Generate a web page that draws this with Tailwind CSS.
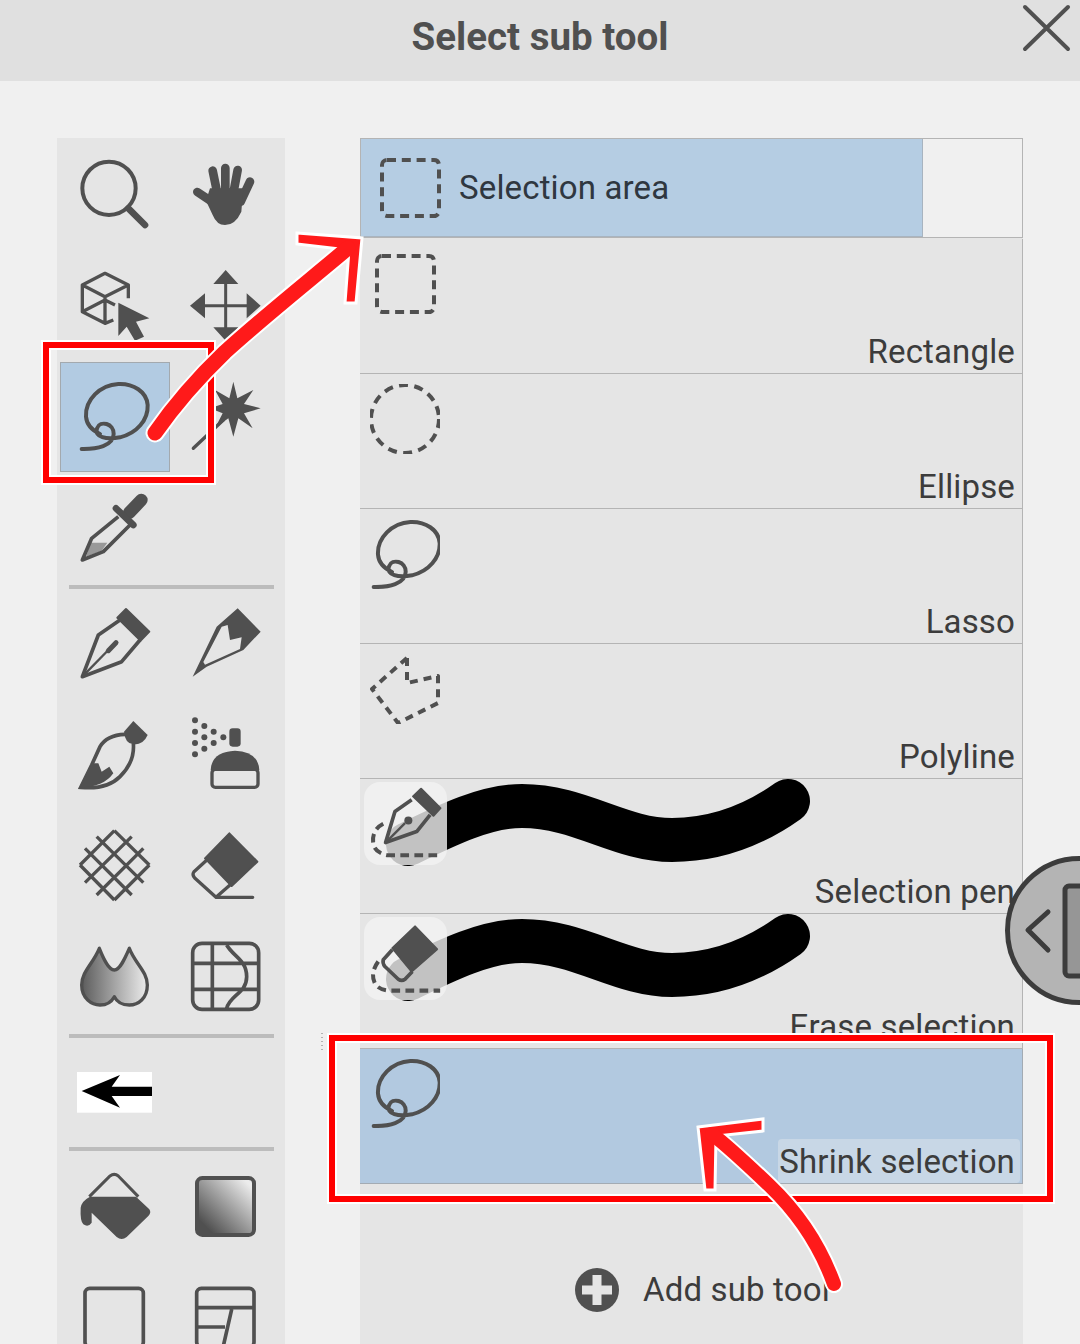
<!DOCTYPE html>
<html lang="en">

<head>
    <meta charset="UTF-8">
    <meta name="viewport" content="width=device-width, initial-scale=1.0">
    <title>Select sub tool</title>
    <script src="https://cdn.jsdelivr.net/npm/@tailwindcss/browser@4"></script>
</head>

<body class="relative w-[1080px] h-[1344px] overflow-hidden bg-[#f0f0f0] font-[Roboto,sans-serif] text-[#3c3c3c]">
    <!-- shared shapes -->
    <svg class="absolute w-0 h-0">
        <defs>
            <linearGradient id="dropFill" x1="0" y1="0" x2="1" y2="0">
                <stop offset="0" stop-color="#5c5c5c" />
                <stop offset="1" stop-color="#ececec" />
            </linearGradient>
            <linearGradient id="squareFill" x1="0" y1="1" x2="1" y2="0">
                <stop offset="0.15" stop-color="#505050" />
                <stop offset="0.9" stop-color="#ececec" />
            </linearGradient>
            <path id="lasso" fill="none" stroke="#505050" stroke-width="12" stroke-linecap="round"
                d="M95 957C140 958 190 948 191 912C192 880 150 870 141 895C132 922 170 930 210 922C260 910 295 870 293 825C290 785 250 760 205 762C150 765 105 810 108 860C110 885 128 902 150 912" />
            <rect id="dashSquare" x="7" y="7" width="57" height="56" rx="5" fill="none" stroke="#505050"
                stroke-width="4" stroke-dasharray="9 5.8" />
        </defs>
    </svg>

    <header class="relative h-[81px] bg-[#e0e0e0] flex items-center justify-center pb-[7px]">
        <h1 class="text-[38.5px] font-bold text-[#505050]">Select sub tool</h1>
        <svg class="absolute left-[1020px] top-[2px] w-[52px] h-[52px]" viewBox="0 0 52 52" fill="none" stroke="#505050" stroke-width="4" stroke-linecap="round">
            <path d="M5 5L48 47M48 5L5 47" />
        </svg>
    </header>

    <main class="flex items-start pl-[57px] pt-[57px]">
        <!-- tool palette -->
        <aside class="w-[228px] h-[1206px] bg-[#e5e5e5] pl-[3px] pt-px">
            <div class="grid grid-cols-[111px_111px]">
                <svg class="w-[111px] h-[111px]" viewBox="30 27 333 333">
                    <circle cx="177" cy="175" r="80" fill="none" stroke="#505050" stroke-width="12" />
                    <path d="M235 235L285 285" stroke="#505050" stroke-width="20" stroke-linecap="round" />
                </svg>
                <svg class="w-[111px] h-[111px]" viewBox="363 27 333 333">
                    <g stroke="#505050" stroke-width="26" stroke-linecap="round">
                        <path d="M488 122L502 190M526 114V190M563 120L550 190M600 155L572 215M442 186L490 218" />
                    </g>
                    <path fill="#505050" d="M480 175H580L574 245Q556 285 525 285Q500 285 488 255L468 212Z" />
                </svg>
                <svg class="w-[111px] h-[111px]" viewBox="30 360 333 333">
                    <path fill="none" stroke="#505050" stroke-width="10" stroke-linejoin="round" d="M235 505V465L165 430L97 465V545L165 580L190 570M97 465L165 500L235 465M165 500V580M97 545L165 510L195 525" />
                    <path fill="#505050" d="M205 518L298 565L258 575L282 620L255 632L230 590L205 618Z" />
                </svg>
                <svg class="w-[111px] h-[111px]" viewBox="363 360 333 333">
                    <path d="M527 440V610M440 527H615" stroke="#505050" stroke-width="9" />
                    <path fill="#505050" d="M527 420L565 462H490ZM527 632L565 592H490ZM420 527L465 490V565ZM632 527L590 490V565Z" />
                </svg>
                <div class="w-[110px] h-[110px] mt-px bg-[#b2cbe2] border border-[#a3a9ae]">
                    <svg class="w-[111px] h-[111px] -ml-px -mt-[2px]" viewBox="30 693 333 333">
                        <use href="#lasso" />
                    </svg>
                </div>
                <svg class="w-[111px] h-[111px]" viewBox="363 693 333 333">
                    <path d="M430 955L520 870" stroke="#505050" stroke-width="10" stroke-linecap="round" />
                    <path fill="#505050" d="M550 755L562 805L610 780L582 822L632 835L582 850L608 895L565 865L550 920L535 865L495 895L518 850L480 835L518 822L495 780L538 805Z" />
                </svg>
                <svg class="w-[111px] h-[111px]" viewBox="30 1026 333 333">
                    <path d="M274 1110L238 1148" stroke="#505050" stroke-width="38" stroke-linecap="round" />
                    <path d="M198 1135L250 1185" stroke="#505050" stroke-width="20" stroke-linecap="round" />
                    <path fill="#999" d="M122 1238H172L155 1262L108 1280Z" />
                    <path fill="none" stroke="#505050" stroke-width="11" stroke-linejoin="round" d="M205 1160L125 1225L97 1290L160 1265L240 1185" />
                </svg>
            </div>
            <div class="w-[205px] h-1 mt-[2px] ml-[9px] bg-[#bcbcbc]"></div>
            <div class="grid grid-cols-[111px_111px] -mt-[2px]">
                <svg class="w-[111px] h-[111px]" viewBox="30 21 333 333">
                    <path fill="none" stroke="#505050" stroke-width="11" stroke-linejoin="round" d="M210 120L145 165L97 290L215 245L270 180" />
                    <path fill="#505050" stroke="#505050" stroke-width="6" stroke-linejoin="round" d="M228 87L298 155L272 182L202 113Z" />
                    <path d="M97 290L175 210" stroke="#505050" stroke-width="7" />
                    <path d="M175 212L198 188" stroke="#505050" stroke-width="15" stroke-linecap="round" />
                </svg>
                <svg class="w-[111px] h-[111px]" viewBox="363 21 333 333">
                    <path fill="#505050" d="M563 85L632 155L580 210L470 260L428 290L500 140Z" />
                    <path fill="#e5e5e5" d="M515 140L533 135L540 180L575 172L570 207L465 254L460 246Z" />
                </svg>
                <svg class="w-[111px] h-[111px]" viewBox="30 354 333 333">
                    <path fill="#505050" d="M250 423L293 465Q280 495 250 493Q225 490 222 455Z" />
                    <path fill="none" stroke="#505050" stroke-width="11" d="M225 463Q170 465 150 500L125 555L92 622Q170 630 210 590Q255 545 250 490" />
                    <path fill="#505050" d="M92 622L125 550L145 550L155 575L178 560L190 580Q160 622 92 622Z" />
                </svg>
                <svg class="w-[111px] h-[111px]" viewBox="363 354 333 333">
                    <g fill="#505050">
                        <circle cx="435" cy="421" r="9" /><circle cx="463" cy="438" r="9" /><circle cx="435" cy="455" r="9" />
                        <circle cx="491" cy="455" r="9" /><circle cx="463" cy="472" r="9" /><circle cx="520" cy="472" r="9" />
                        <circle cx="435" cy="489" r="9" /><circle cx="491" cy="489" r="9" /><circle cx="463" cy="506" r="9" />
                        <circle cx="435" cy="523" r="9" />
                        <rect x="538" y="445" width="34" height="55" rx="10" />
                        <path d="M482 570Q485 515 555 512Q625 515 628 570Z" />
                    </g>
                    <rect x="486" y="568" width="138" height="54" rx="10" fill="none" stroke="#505050" stroke-width="10" />
                </svg>
                <svg class="w-[111px] h-[111px]" viewBox="30 687 333 333">
                    <path fill="none" stroke="#505050" stroke-width="10" d="M140 770L280 908M193 752L298 855M105 805L245 945M90 855L193 960M193 752L90 855M245 770L105 908M280 805L140 945M298 855L193 960" />
                </svg>
                <svg class="w-[111px] h-[111px]" viewBox="363 687 333 333">
                    <path fill="#505050" stroke="#505050" stroke-width="6" stroke-linejoin="round" d="M538 760L622 845L545 918L465 835Z" />
                    <path fill="none" stroke="#505050" stroke-width="10" stroke-linecap="round" stroke-linejoin="round" d="M468 842L432 875Q425 885 435 895L498 952L540 915M498 952H608" />
                </svg>
                <svg class="w-[111px] h-[111px]" viewBox="30 1020 333 333">
                    <path fill="url(#dropFill)" stroke="#505050" stroke-width="10" stroke-linejoin="round" d="M148 1105C130 1150 95 1175 95 1215C95 1255 125 1275 150 1275C170 1275 185 1265 193 1250C200 1265 215 1275 238 1275C265 1275 292 1255 292 1215C292 1175 255 1150 238 1105C225 1135 210 1170 193 1170C175 1170 160 1135 148 1105Z" />
                </svg>
                <svg class="w-[111px] h-[111px]" viewBox="363 1020 333 333">
                    <rect x="428" y="1090" width="198" height="198" rx="28" fill="none" stroke="#505050" stroke-width="11" />
                    <path fill="none" stroke="#505050" stroke-width="11" d="M487 1090V1288M428 1150H626M428 1228H626M530 1095C550 1130 590 1140 590 1190C590 1240 540 1245 530 1285" />
                </svg>
            </div>
            <div class="w-[205px] h-1 mt-[3px] ml-[9px] bg-[#bcbcbc]"></div>
            <svg class="w-[111px] h-[111px] -mt-px" viewBox="30 21 333 333">
                <rect x="81" y="126" width="225" height="122" fill="#fff" />
                <path fill="#000" d="M95 183L210 135L185 170H306V198H185L210 233Z" />
            </svg>
            <div class="w-[205px] h-1 ml-[9px] -mt-px bg-[#bcbcbc]"></div>
            <div class="grid grid-cols-[111px_111px]">
                <svg class="w-[111px] h-[111px]" viewBox="30 360 333 333">
                    <path fill="none" stroke="#505050" stroke-width="9" d="M118 497L180 435Q193 425 205 435L265 497" />
                    <path fill="#505050" d="M120 497H258L298 535Q305 545 295 555L230 618Q215 630 200 618L125 545V575Q115 590 100 580Q90 570 92 530Q95 510 120 497Z" />
                </svg>
                <svg class="w-[111px] h-[111px]" viewBox="363 360 333 333">
                    <rect x="441" y="441" width="171" height="171" rx="16" fill="url(#squareFill)" stroke="#505050" stroke-width="12" />
                </svg>
                <svg class="w-[111px] h-[111px]" viewBox="30 693 333 333">
                    <rect x="105" y="772" width="175" height="175" rx="14" fill="none" stroke="#505050" stroke-width="11" />
                </svg>
                <svg class="w-[111px] h-[111px]" viewBox="363 693 333 333">
                    <rect x="440" y="772" width="172" height="175" rx="14" fill="none" stroke="#505050" stroke-width="11" />
                    <path fill="none" stroke="#505050" stroke-width="11" d="M440 830H612M440 888H525M545 835L520 945" />
                </svg>
            </div>
        </aside>

        <!-- sub tool list -->
        <section class="w-[663px] ml-[75px] text-[33px] tracking-[0.15px]">
            <div class="h-[100px] border border-[#b4b4b4]">
                <div class="w-[562px] h-full bg-[#b5cde3] border-r border-b border-[#a8b4c0] flex items-center pl-[14px] gap-[14px] text-[#2f3740]">
                    <svg class="w-[70px] h-[70px]" viewBox="0 0 70 70"><use href="#dashSquare" /></svg>
                    <span>Selection area</span>
                </div>
            </div>
            <div class="bg-[#e5e5e5] h-[1106px] pt-px">
                <div class="h-[135px] border-b border-r border-[#b4b4b4] flex flex-col justify-between pt-[10px] pl-[10px] pr-[7px]">
                    <svg class="w-[70px] h-[70px]" viewBox="0 0 70 70"><use href="#dashSquare" /></svg>
                    <span class="self-end leading-[42px]">Rectangle</span>
                </div>
                <div class="h-[135px] border-b border-r border-[#b4b4b4] flex flex-col justify-between pt-[10px] pl-[10px] pr-[7px]">
                    <svg class="w-[70px] h-[70px]" viewBox="0 0 70 70">
                        <circle cx="35" cy="35" r="34" fill="none" stroke="#505050" stroke-width="4" stroke-dasharray="9 6.4" />
                    </svg>
                    <span class="self-end leading-[42px]">Ellipse</span>
                </div>
                <div class="h-[135px] border-b border-r border-[#b4b4b4] flex flex-col justify-between pt-[10px] pl-[10px] pr-[7px]">
                    <svg class="w-[70px] h-[70px]" viewBox="84 753 210 210"><use href="#lasso" /></svg>
                    <span class="self-end leading-[42px]">Lasso</span>
                </div>
                <div class="h-[135px] border-b border-r border-[#b4b4b4] flex flex-col justify-between pt-[10px] pl-[10px] pr-[7px]">
                    <svg class="w-[70px] h-[70px]" viewBox="0 0 70 70">
                        <path d="M37 4V29L68 22V49L28 69L2 35Z" fill="none" stroke="#505050" stroke-width="4" stroke-dasharray="8 6" stroke-linejoin="round" />
                    </svg>
                    <span class="self-end leading-[42px]">Polyline</span>
                </div>
                <div class="relative h-[135px] border-b border-r border-[#b4b4b4] flex flex-col justify-between pt-[3px] pl-[4px] pr-[7px]">
                    <svg class="absolute left-0 top-0 w-[460px] h-[100px]" viewBox="360 778 460 100">
                        <path d="M408 843C445 825 485 805 522 805C580 805 620 839 672 839C720 839 760 820 788 800" fill="none" stroke="#000" stroke-width="44" stroke-linecap="round" />
                    </svg>
                    <div class="relative w-[83px] h-[83px] rounded-2xl bg-[#f2f2f2]/80">
                        <svg class="w-[83px] h-[83px]" viewBox="28 427 247 248">
                            <path fill="none" stroke="#505050" stroke-width="12" stroke-dasharray="26 16" d="M85 552Q50 570 55 610Q60 640 100 646H255" />
                            <path fill="none" stroke="#505050" stroke-width="11" stroke-linejoin="round" d="M170 480L120 515L92 608L185 575L225 525" />
                            <path fill="#505050" stroke="#505050" stroke-width="6" stroke-linejoin="round" d="M198 447L256 505L235 528L174 470Z" />
                            <path d="M92 608L150 550" stroke="#505050" stroke-width="7" />
                            <circle cx="160" cy="542" r="12" fill="#505050" />
                        </svg>
                    </div>
                    <span class="self-end leading-[42px]">Selection pen</span>
                </div>
                <div class="relative h-[135px] border-b border-r border-[#b4b4b4] flex flex-col justify-between pt-[3px] pl-[4px] pr-[7px]">
                    <svg class="absolute left-0 top-0 w-[460px] h-[100px]" viewBox="360 778 460 100">
                        <path d="M408 843C445 825 485 805 522 805C580 805 620 839 672 839C720 839 760 820 788 800" fill="none" stroke="#000" stroke-width="44" stroke-linecap="round" />
                    </svg>
                    <div class="relative w-[83px] h-[83px] rounded-2xl bg-[#f2f2f2]/80">
                        <svg class="w-[83px] h-[83px]" viewBox="28 832 247 248">
                            <path fill="none" stroke="#505050" stroke-width="12" stroke-dasharray="26 16" d="M70 965Q45 1000 60 1030Q70 1050 105 1052H255" />
                            <path fill="#505050" stroke="#505050" stroke-width="6" stroke-linejoin="round" d="M180 860L246 928L170 995L112 925Z" />
                            <path fill="none" stroke="#505050" stroke-width="11" stroke-linejoin="round" d="M112 930L85 960Q82 970 90 980L130 1018Q140 1025 150 1018L172 995" />
                        </svg>
                    </div>
                    <span class="self-end leading-[42px]">Erase selection</span>
                </div>
                <div class="h-[136px] -mt-px bg-[#b2c9e0] border-y border-r border-[#a3abb3] flex flex-col justify-between pt-[9px] pl-[10px] pr-[2px]">
                    <svg class="w-[70px] h-[70px]" viewBox="84 753 210 210"><use href="#lasso" /></svg>
                    <span class="self-end leading-[43px] pt-px bg-[#c8d7e6] rounded-sm pl-px pr-[5px]">Shrink selection</span>
                </div>
                <div class="flex items-center gap-[24px] pl-[215px] pt-[81px]">
                    <svg class="w-[44px] h-[44px]" viewBox="0 0 44 44">
                        <circle cx="22" cy="22" r="22" fill="#505050" />
                        <path d="M22 7V37M7 22H37" stroke="#e5e5e5" stroke-width="9" />
                    </svg>
                    <span>Add sub tool</span>
                </div>
            </div>
        </section>
    </main>

    <!-- collapse handle at the right edge -->
    <div class="absolute left-[1005px] top-[856px] w-[149px] h-[149px] rounded-full bg-[#b4b4b4] border-[5px] border-[#3c3c3c]">
        <svg class="absolute -left-[5px] -top-[5px] w-[149px] h-[149px]" viewBox="1005 856 149 149" fill="none" stroke="#3c3c3c" stroke-linecap="round" stroke-linejoin="round">
            <path d="M1048 912L1028 930L1048 950" stroke-width="5" />
            <rect x="1065" y="886" width="60" height="90" rx="4" fill="#969696" stroke-width="5" />
        </svg>
    </div>

    <!-- red annotations drawn over the screenshot -->
    <svg class="absolute left-0 top-0 w-[1080px] h-[1344px] pointer-events-none" viewBox="0 0 1080 1344" fill="none">
        <path d="M322 1033V1050" stroke="#777" stroke-dasharray="1 3" />
        <rect x="46" y="345" width="165" height="135" stroke="#fff" stroke-width="10" />
        <rect x="46" y="345" width="165" height="135" stroke="#ff0000" stroke-width="6" />
        <rect x="332" y="1038" width="718" height="161" stroke="#fff" stroke-width="10" />
        <rect x="332" y="1038" width="718" height="161" stroke="#ff0000" stroke-width="6" />
        <path d="M155 433C178 400 200 376 225 352C260 320 310 280 348 248" stroke="#fff" stroke-width="19" stroke-linecap="round" />
        <path d="M297 233L362 238L356 303L345 303L349 250L297 244Z" fill="#ff1a1a" stroke="#fff" stroke-width="3" />
        <path d="M155 433C178 400 200 376 225 352C260 320 310 280 348 248" stroke="#ff1a1a" stroke-width="15" stroke-linecap="round" />
        <path d="M834 1284C818 1240 795 1210 770 1186C750 1167 730 1148 712 1134" stroke="#fff" stroke-width="18" stroke-linecap="round" />
        <path d="M698 1127L763 1119L763 1131L716 1136L715 1190L705 1190Z" fill="#ff1a1a" stroke="#fff" stroke-width="3" />
        <path d="M834 1284C818 1240 795 1210 770 1186C750 1167 730 1148 712 1134" stroke="#ff1a1a" stroke-width="14" stroke-linecap="round" />
    </svg>
</body>

</html>
